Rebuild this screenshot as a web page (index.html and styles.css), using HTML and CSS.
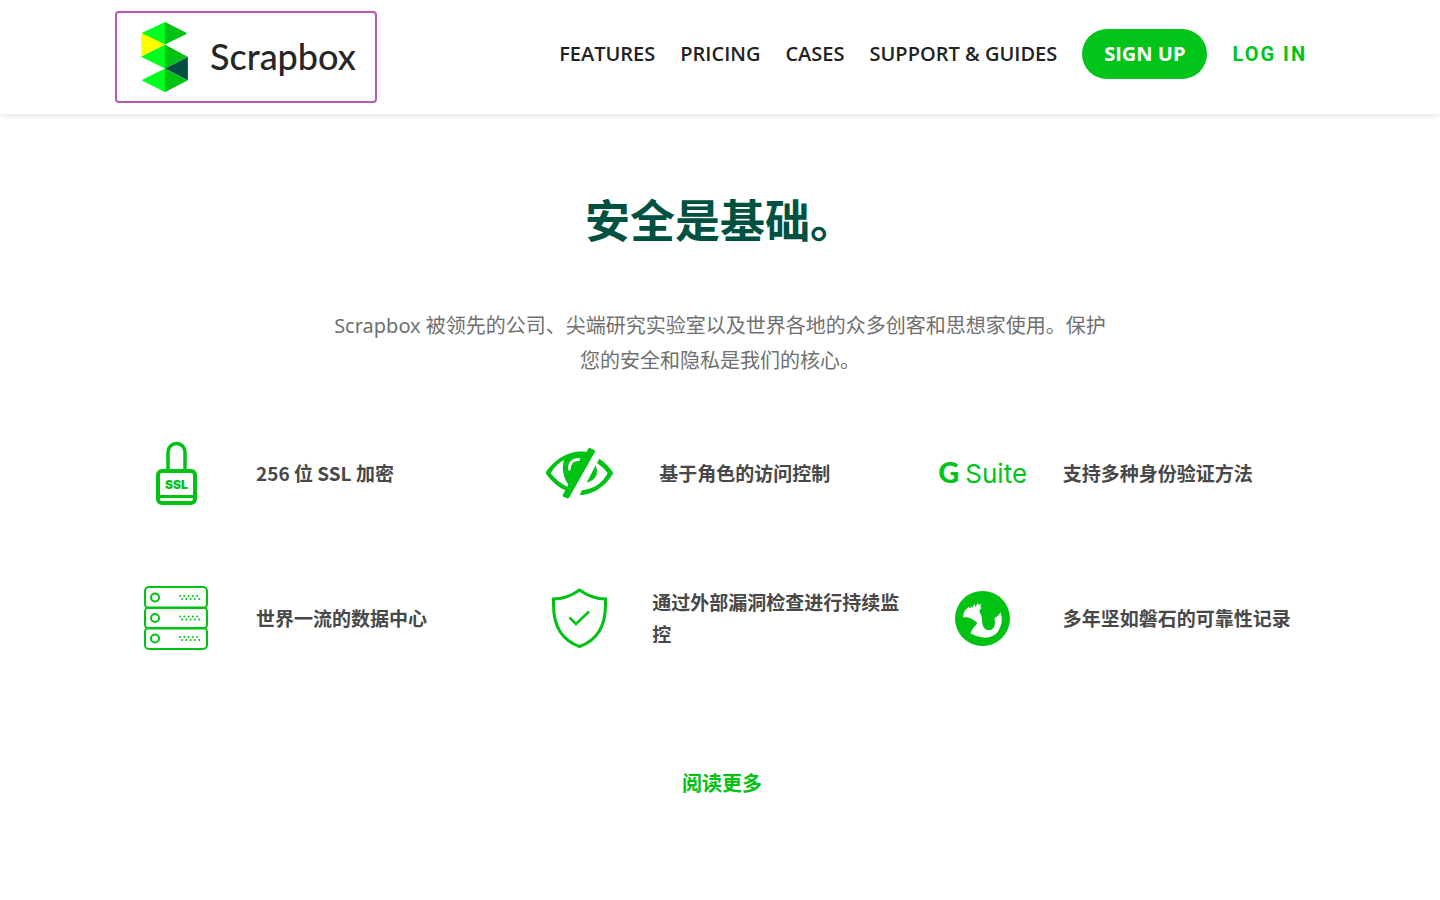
FILE: index.html
```html
<!DOCTYPE html>
<html lang="zh-CN">
<head>
<meta charset="utf-8">
<meta name="viewport" content="width=device-width, initial-scale=1">
<title>Scrapbox</title>
<link rel="stylesheet" href="styles.css">
</head>
<body>
<header class="site-header">
  <div class="container header-inner">
    <a class="brand" href="#">
      <svg class="brand-mark" viewBox="108 65 141 211" aria-hidden="true">
        <path fill="#00ff1e" d="M180 65L113 97Q109 100 113 102L180 133Z"/>
        <path fill="#00c213" d="M180 65L243 97Q247 100 243 102L180 133Z"/>
        <path fill="#00ff1e" d="M108 169L180 133V205L112 172Z"/>
        <path fill="#ff0" d="M112 100L180 133L108 169V104Q108 99 112 100Z"/>
        <path fill="#00c213" d="M180 133L248 170L180 205Z"/>
        <path fill="#00513f" d="M180 205L249 170V241Z"/>
        <path fill="#00ff1e" d="M180 205L113 238Q109 241 113 243L175 274Q178 276 180 276Z"/>
        <path fill="#00c213" d="M180 205L248 241L185 274Q182 276 180 276Z"/>
      </svg>
      <span class="brand-name">Scrapbox</span>
    </a>
    <nav class="nav">
      <a class="nav-link" href="#">FEATURES</a>
      <a class="nav-link" href="#">PRICING</a>
      <a class="nav-link" href="#">CASES</a>
      <a class="nav-link" href="#">SUPPORT &amp; GUIDES</a>
      <a class="signup" href="#">SIGN UP</a>
      <a class="login" href="#">LOG IN</a>
    </nav>
  </div>
</header>
<main class="container main">
  <h1 class="title">安全是基础。</h1>
  <p class="intro">Scrapbox 被领先的公司、尖端研究实验室以及世界各地的众多创客和思想家使用。保护您的安全和隐私是我们的核心。</p>
  <ul class="features">
    <li class="feature">
      <span class="feature-icon">
        <svg width="41" height="64" viewBox="0 0 41 64" fill="none" stroke="#00c213" stroke-width="4" aria-hidden="true">
          <path stroke-width="3.500" d="M12 28V11a8.500 8.500 0 0 1 17 0V28"/>
          <rect x="2" y="30" width="37" height="32" rx="4"/>
          <path stroke-width="3" d="M2 55.500H39"/>
          <text class="ssl-label" x="20.500" y="48" text-anchor="middle">SSL</text>
        </svg>
      </span>
      <span class="feature-text">256 位 SSL 加密</span>
    </li>
    <li class="feature">
      <span class="feature-icon">
        <svg width="67" height="51" viewBox="51 41 201 153" aria-hidden="true">
          <path fill="#00c213" fill-rule="evenodd" d="M172 53C120 45 74 79 51 113Q49 117 53 121Q79 155 109 168L101 182Q100 185 103 187L115 192Q118 193 120 190L198 52Q199 50 197 48L183 41Q180 40 178 43ZM105 77Q94 115 118 151L114 157Q84 142 65 117Q81 89 105 77Z"/>
          <path fill="none" stroke="#fff" stroke-width="8" stroke-linecap="round" d="M121 105Q121 76 150 75"/>
          <path fill="#00c213" d="M211 73Q235 89 251 113Q253 117 250 121C224 162 188 181 152 182L159 168Q211 163 236 117Q224 99 204 86Z"/>
          <path fill="#00c213" d="M200 93Q215 133 173 145Z"/>
        </svg>
      </span>
      <span class="feature-text">基于角色的访问控制</span>
    </li>
    <li class="feature">
      <span class="feature-icon"><span class="gsuite"><b class="gsuite-g">G</b><span>Suite</span></span></span>
      <span class="feature-text">支持多种身份验证方法</span>
    </li>
    <li class="feature">
      <span class="feature-icon">
        <svg width="64" height="64" viewBox="0 0 64 64" fill="none" stroke="#00c213" stroke-width="2" aria-hidden="true">
          <defs>
            <g id="server">
              <rect x="1" y="1" width="62" height="21" rx="4"/>
              <circle cx="11" cy="11.500" r="4"/>
              <path stroke-linecap="round" stroke-dasharray="0 4.300" d="M36 10H55M38 13H57"/>
            </g>
          </defs>
          <use href="#server"/>
          <use href="#server" y="20.500"/>
          <use href="#server" y="41"/>
        </svg>
      </span>
      <span class="feature-text">世界一流的数据中心</span>
    </li>
    <li class="feature feature-wrap">
      <span class="feature-icon">
        <svg width="55" height="60" viewBox="0 0 55 60" fill="none" stroke="#00c213" stroke-width="3" aria-hidden="true">
          <path d="M27.500 2Q40 11 53.500 11V17C53.500 40 43 53 27.500 58.500C12 53 1.500 40 1.500 17V11Q15 11 27.500 2Z"/>
          <path stroke-width="2.500" d="M17.500 29.500L24 36L37 23.500"/>
        </svg>
      </span>
      <span class="feature-text">通过外部漏洞检查进行持续监控</span>
    </li>
    <li class="feature">
      <span class="feature-icon">
        <svg width="55" height="55" viewBox="51 33 165 165" aria-hidden="true">
          <circle cx="133.500" cy="115.500" r="82.500" fill="#00c213"/>
          <path fill="#fff" d="M75 112Q76 92 88 85L92 80L96 85L101 79L104 84L109 71L113 82Q116 72 120 69L122 75L130 72L127 80L131 84Q119 91 128 102C134 112 130 129 137 142Q142 151 153 151C168 150 174 135 169 115Q181 110 188 97Q197 126 182 151C167 176 135 181 97 160Q105 142 118 130C105 116 92 111 75 112Z"/>
        </svg>
      </span>
      <span class="feature-text">多年坚如磐石的可靠性记录</span>
    </li>
  </ul>
  <a class="read-more" href="#">阅读更多</a>
</main>
</body>
</html>
```
FILE: styles.css
```css
* {
  box-sizing: border-box;
}

body {
  margin: 0;
  background: #fff;
  color: #484848;
  font-family: "Noto Sans", "Noto Sans CJK SC", sans-serif;
  font-size: 20px;
}

a {
  text-decoration: none;
}

.container {
  max-width: 1210px;
  margin: 0 auto;
}

.site-header {
  background: #fff;
  box-shadow: 0 1px 6px rgba(0, 0, 0, 0.15);
}

.header-inner {
  display: flex;
  align-items: flex-start;
  justify-content: space-between;
  padding: 11px 18px 11px 0;
}

.brand {
  display: flex;
  align-items: center;
  gap: 22px;
  padding: 9px 19px 9px 24px;
  border: 2px solid #b45cb4;
  border-radius: 4px;
  color: #262626;
}

.brand-mark {
  width: 47px;
  height: 70px;
}

.brand-name {
  font-family: Lato, sans-serif;
  font-size: 36px;
  font-weight: 500;
  line-height: 36px;
  padding-bottom: 2px;
}

.nav {
  display: flex;
  align-items: center;
  gap: 25px;
  padding-top: 18px;
}

.nav-link {
  color: #222;
  font-family: "Open Sans", sans-serif;
  font-weight: 600;
  line-height: 50px;
}

.signup {
  padding: 0 22px;
  border-radius: 25px;
  background: #00c41a;
  color: #fff;
  font-family: "Open Sans", sans-serif;
  font-weight: 700;
  line-height: 50px;
}

.login {
  color: #00c41a;
  font-family: Roboto, sans-serif;
  font-weight: 700;
  letter-spacing: 2px;
}

.main {
  display: flex;
  flex-direction: column;
  align-items: center;
  padding: 73px 0 80px;
}

.title {
  margin: 0;
  color: #00513f;
  font-family: "Noto Sans CJK SC", sans-serif;
  font-size: 45px;
  font-weight: 700;
  line-height: 64px;
}

.intro {
  max-width: 780px;
  margin: 57px 0 0;
  color: #6f6f6f;
  line-height: 35px;
  text-align: center;
}

.features {
  display: grid;
  grid-template-columns: repeat(3, 1fr);
  row-gap: 81px;
  width: 100%;
  margin: 63px 0 0;
  padding: 0;
  list-style: none;
}

.feature {
  display: flex;
  align-items: center;
  gap: 19px;
  min-height: 64px;
  padding-right: 16px;
}

.feature-wrap {
  gap: 12px;
}

.feature-icon {
  display: flex;
  flex: 0 0 122px;
  justify-content: center;
}

.feature-text {
  font-family: "Noto Sans CJK SC", sans-serif;
  font-size: 19px;
  font-weight: 700;
  line-height: 32px;
}

.ssl-label {
  fill: #00c213;
  stroke: none;
  font-family: Inter, sans-serif;
  font-size: 12px;
  font-weight: 900;
}

.gsuite {
  display: flex;
  align-items: baseline;
  gap: 6px;
  color: #00c41a;
  font-family: Inter, sans-serif;
  font-size: 26px;
  line-height: 32px;
}

.gsuite-g {
  font-family: Lato, sans-serif;
  font-size: 29px;
  font-weight: 900;
}

.read-more {
  margin-top: 118px;
  padding-left: 4px;
  color: #00c213;
  font-weight: 700;
  line-height: 32px;
}
```
